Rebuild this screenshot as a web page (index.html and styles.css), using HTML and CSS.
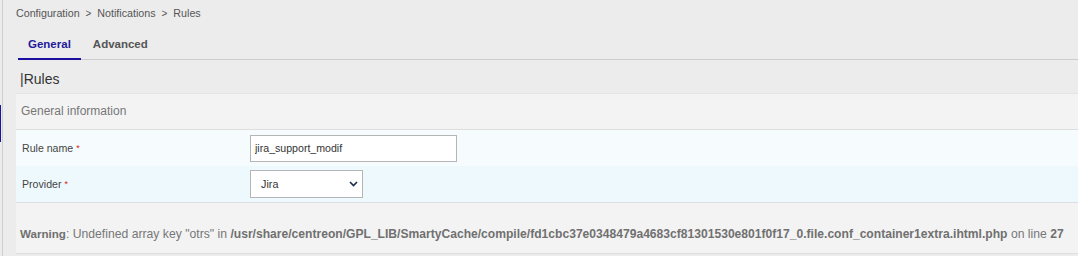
FILE: index.html
```html
<!DOCTYPE html>
<html>
<head>
<meta charset="utf-8">
<link rel="stylesheet" href="styles.css">
</head>
<body>
<div class="app">
  <div class="edge"><div class="edge-mark"></div></div>
  <div class="main">
    <div class="crumbs">Configuration <span class="sep">&gt;</span> Notifications <span class="sep">&gt;</span> Rules</div>
    <div class="tabs">
      <div class="tab active">General</div>
      <div class="tab">Advanced</div>
    </div>
    <div class="title">|Rules</div>
    <div class="form">
      <div class="section">General information</div>
      <div class="row row-a">
        <div class="label">Rule name <span class="req">*</span></div>
        <div class="field"><input class="text" type="text" value="jira_support_modif"></div>
      </div>
      <div class="row row-b">
        <div class="label">Provider <span class="req">*</span></div>
        <div class="field">
          <div class="select-wrap">
            <select class="select"><option>Jira</option></select>
            <svg class="chev" width="9" height="6" viewBox="0 0 9 6"><path d="M1 1 L4.5 4.5 L8 1" fill="none" stroke="#1c2b4a" stroke-width="1.6"/></svg>
          </div>
        </div>
      </div>
      <div class="warning"><b class="warn-label">Warning</b>: Undefined array key "otrs" in <b>/usr/share/centreon/GPL_LIB/SmartyCache/compile/fd1cbc37e0348479a4683cf81301530e801f0f17_0.file.conf_container1extra.ihtml.php</b> on line <b>27</b></div>
    </div>
  </div>
</div>
</body>
</html>
```
FILE: styles.css
```css
html, body {
  margin: 0;
  padding: 0;
  background: #ececec;
  font-family: "Liberation Sans", Arial, sans-serif;
}
.app {
  display: flex;
  min-height: 256px;
}
.edge {
  width: 2px;
  border-right: 1px solid #cfcfcf;
  flex: none;
}
.edge-mark {
  margin-top: 105px;
  width: 1px;
  height: 37px;
  background: #1a12a0;
}
.main {
  flex: 1;
  padding-left: 13px;
}
.crumbs {
  height: 26px;
  line-height: 26px;
  font-size: 10.7px;
  color: #555;
}
.crumbs .sep {
  margin: 0 3px;
  font-size: 10px;
}
.tabs {
  display: flex;
  gap: 2px;
  margin-left: 2px;
  border-bottom: 1px solid #cccccc;
}
.tab {
  padding: 11px 10px 7px;
  line-height: 14px;
  font-size: 11.5px;
  font-weight: bold;
  color: #555;
  border-bottom: 2px solid transparent;
  margin-bottom: -1px;
}
.tab.active {
  color: #231a9c;
  border-bottom-color: #1a0f9e;
}
.title {
  padding: 10px 4px 4px;
  line-height: 19px;
  font-size: 14px;
  color: #333;
}
.section {
  height: 35px;
  line-height: 35px;
  padding-left: 5px;
  font-size: 12px;
  color: #777;
  background: #f3f3f3;
  border-top: 1px solid #e4e4e4;
  border-bottom: 1px solid #dedede;
}
.row {
  display: flex;
  align-items: center;
  height: 36px;
}
.row-a { background: #f6fcfe; }
.row-b {
  background: #eef9fd;
  border-bottom: 1px solid #dedede;
}
.label {
  width: 228px;
  padding-left: 6px;
  font-size: 10.6px;
  color: #444;
}
.req {
  color: #e02020;
  font-size: 9px;
  vertical-align: 1px;
}
.text {
  box-sizing: border-box;
  width: 207px;
  height: 27px;
  margin: 0;
  padding: 0 4px;
  border: 1px solid #b5b5b5;
  background: #fff;
  font-family: "Liberation Sans", Arial, sans-serif;
  font-size: 10.6px;
  color: #333;
  outline: none;
}
.select-wrap {
  position: relative;
  width: 113px;
  height: 28px;
}
.select {
  -webkit-appearance: none;
  appearance: none;
  box-sizing: border-box;
  width: 113px;
  height: 28px;
  margin: 0;
  padding: 0 0 0 10px;
  border: 1px solid #b5b5b5;
  border-radius: 0;
  background: #fff;
  font-family: "Liberation Sans", Arial, sans-serif;
  font-size: 10.8px;
  color: #333;
  outline: none;
}
.chev {
  position: absolute;
  right: 5px;
  top: 11px;
}
.warning {
  height: 26px;
  padding: 24px 4px 0;
  line-height: 14px;
  font-size: 12.2px;
  color: #777;
  background: #f3f3f3;
  border-bottom: 1px solid #dedede;
  white-space: nowrap;
}
.warning b {
  font-size: 12.1px;
  color: #707070;
}
.warning .warn-label {
  font-size: 11.6px;
}
```
